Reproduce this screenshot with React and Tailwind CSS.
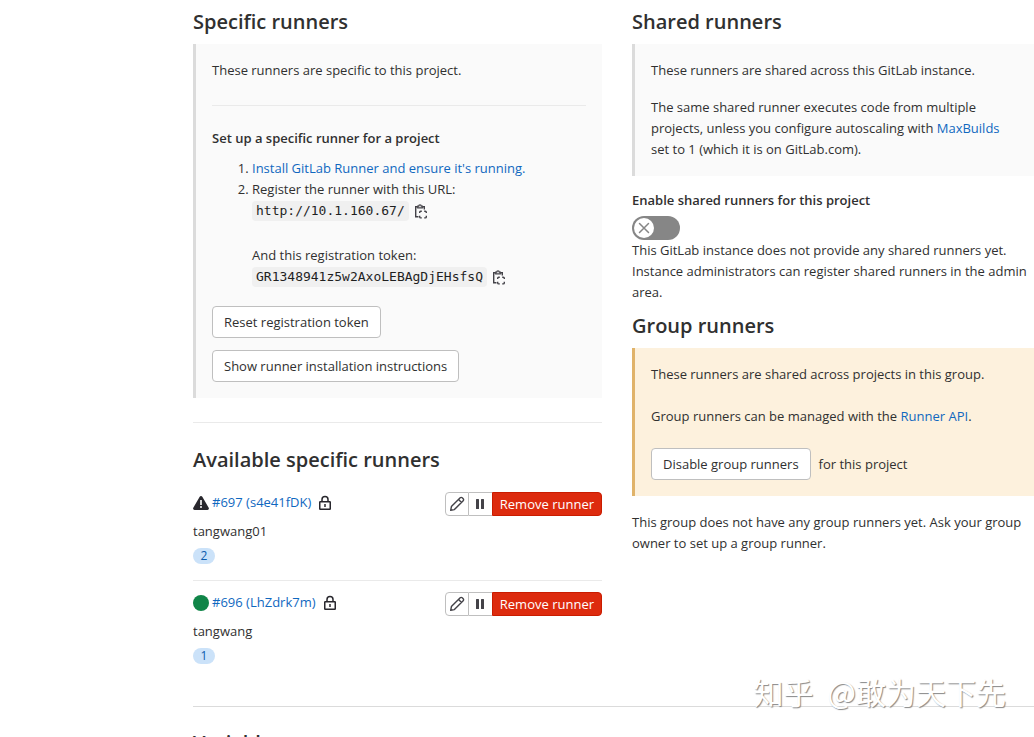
import React from 'react';

const runners = [
    { id: 697, token: 's4e41fDK', name: 'tangwang01', tag: '2', online: false },
    { id: 696, token: 'LhZdrk7m', name: 'tangwang', tag: '1', online: true },
];

const CopyIcon = () => (
    <svg width="16" height="16" viewBox="0 0 16 16" fill="none" stroke="#434248" strokeWidth="1.4">
        <path d="M5.5 12.8H2.7V2.7H4.5M9.5 2.7h1.8V5.5" />
        <path d="M4.7 3.8V2.2h1a1.3 1.3 0 0 1 2.6 0h1v1.6z" strokeWidth="1.2" />
        <path d="M6.7 9V8.2a1 1 0 0 1 1-1h1.1M11.2 7.2h1.1a1 1 0 0 1 1 1V9M13.3 11.8v1.1a1 1 0 0 1-1 1h-1.1M8.8 13.9H7.7a1 1 0 0 1-1-1v-1.1" />
    </svg>
);

const LockIcon = () => (
    <svg width="16" height="16" viewBox="0 0 16 16" fill="none" stroke="#28272d" strokeWidth="1.5">
        <rect x="2.75" y="6.75" width="10.5" height="7.5" rx="0.5" />
        <path d="M5 6.5v-2a3 3 0 0 1 6 0v2" />
        <path d="M8 9v3" />
    </svg>
);

const WarningIcon = () => (
    <svg width="16" height="16" viewBox="0 0 16 16">
        <path
            fill="#28272d"
            fillRule="evenodd"
            d="M9.3 1.7a1.5 1.5 0 0 0-2.6 0L.3 12.8A1.5 1.5 0 0 0 1.6 15h12.8a1.5 1.5 0 0 0 1.3-2.2L9.3 1.7zM7.2 5h1.6v5H7.2V5zM8 13a1 1 0 1 0 0-2 1 1 0 0 0 0 2z"
        />
    </svg>
);

const OnlineIcon = () => (
    <svg width="16" height="16" viewBox="0 0 16 16">
        <circle cx="8" cy="8" r="8" fill="#108548" />
    </svg>
);

const PencilIcon = () => (
    <svg width="16" height="16" viewBox="0 0 16 16" fill="none" stroke="#434248" strokeWidth="1.4" strokeLinejoin="round">
        <path d="M1.7 14.3l.7-3.7 8.8-8.8a1.4 1.4 0 0 1 2 0l1 1a1.4 1.4 0 0 1 0 2l-8.8 8.8zM9.6 3.6l2.9 2.9" />
    </svg>
);

const PauseIcon = () => (
    <svg width="16" height="16" viewBox="0 0 16 16" fill="#434248">
        <rect x="4" y="3" width="3" height="10" rx="0.5" />
        <rect x="9" y="3" width="3" height="10" rx="0.5" />
    </svg>
);

const Heading = ({ children }) => (
    <h4 className="text-xl leading-6 font-semibold text-[#303030]">{children}</h4>
);

const Link = ({ children }) => (
    <a href="#" className="text-[#1068bf] hover:underline">{children}</a>
);

const Button = ({ children }) => (
    <button type="button" className="h-8 rounded border border-[#bfbfbf] bg-white px-[11px] text-[#303030]">
        {children}
    </button>
);

const CopyField = ({ value }) => (
    <div className="flex h-6 items-center gap-1">
        <code className="mb-0.5 rounded bg-[#f0f0f0] px-1 font-['DejaVu_Sans_Mono',monospace] text-[13px] leading-5 text-[#1f1f1f]">{value}</code>
        <button type="button" aria-label="Copy">
            <CopyIcon />
        </button>
    </div>
);

const RunnerRow = ({ runner }) => (
    <li className="flex justify-between border-[#eaeaea] pt-[11px] pb-4 not-last:border-b">
        <div>
            <div className="flex items-center">
                {runner.online ? <OnlineIcon /> : <WarningIcon />}
                <span className="mr-1.5 ml-[3px]">
                    <Link>#{runner.id} ({runner.token})</Link>
                </span>
                <LockIcon />
            </div>
            <p className="mt-2">{runner.name}</p>
            <span className="mt-1.5 flex h-4 w-[22px] items-center justify-center rounded-full bg-[#cbe2f9] text-xs text-[#0b5cad]">
                {runner.tag}
            </span>
        </div>
        <div className="flex h-6">
            <button type="button" aria-label="Edit" className="flex w-6 items-center justify-center rounded-l border border-[#bfbfbf] bg-white">
                <PencilIcon />
            </button>
            <button type="button" aria-label="Pause" className="flex w-[23px] items-center justify-center border-y border-[#bfbfbf] bg-white">
                <PauseIcon />
            </button>
            <button type="button" className="rounded-r border border-[#c91c00] bg-[#dd2b0e] px-[7px] text-white">
                Remove runner
            </button>
        </div>
    </li>
);

const SpecificRunners = () => (
    <section>
        <Heading>Specific runners</Heading>
        <div className="mt-2.5 border-l-3 border-[#dbdbdb] bg-[#fafafa] p-4">
            <p>These runners are specific to this project.</p>
            <hr className="my-6 border-[#eaeaea]" />
            <h5 className="-mt-0.5 font-semibold">Set up a specific runner for a project</h5>
            <ol className="mt-[9px] list-decimal pl-10">
                <li><Link>Install GitLab Runner and ensure it's running.</Link></li>
                <li>
                    Register the runner with this URL:
                    <CopyField value="http://10.1.160.67/" />
                    <p className="mt-[21px]">And this registration token:</p>
                    <CopyField value="GR1348941z5w2AxoLEBAgDjEHsfsQ" />
                </li>
            </ol>
            <div className="mt-4 flex flex-col items-start gap-3">
                <Button>Reset registration token</Button>
                <Button>Show runner installation instructions</Button>
            </div>
        </div>
        <hr className="mt-6 mb-[25px] border-[#eaeaea]" />
        <Heading>Available specific runners</Heading>
        <ul className="mt-[9px]">
            {runners.map((runner) => (
                <RunnerRow key={runner.id} runner={runner} />
            ))}
        </ul>
    </section>
);

const SharedRunners = () => (
    <section>
        <Heading>Shared runners</Heading>
        <div className="mt-2.5 border-l-3 border-[#dbdbdb] bg-[#fafafa] p-4">
            <p>These runners are shared across this GitLab instance.</p>
            <p className="mt-4">
                The same shared runner executes code from multiple projects, unless you configure autoscaling
                with <Link>MaxBuilds</Link> set to 1 (which it is on GitLab.com).
            </p>
        </div>
        <label htmlFor="shared-runners" className="mt-3.5 block font-semibold">
            Enable shared runners for this project
        </label>
        <div className="relative mt-[5px] h-6 w-12">
            <input id="shared-runners" type="checkbox" role="switch" className="block h-6 w-12 appearance-none rounded-full bg-[#868686]" />
            <span className="pointer-events-none absolute top-0.5 left-0.5 size-5 rounded-full bg-white">
                <svg width="20" height="20" viewBox="0 0 20 20" stroke="#868686" strokeWidth="1.5" strokeLinecap="round">
                    <path d="M5.5 5.5l9 9M14.5 5.5l-9 9" />
                </svg>
            </span>
        </div>
        <p>
            This GitLab instance does not provide any shared runners yet. Instance administrators can register
            shared runners in the admin area.
        </p>
    </section>
);

const GroupRunners = () => (
    <section className="mt-[11px]">
        <Heading>Group runners</Heading>
        <div className="mt-2.5 border-l-3 border-[#e0b36a] bg-[#fdf1dd] p-4">
            <p>These runners are shared across projects in this group.</p>
            <p className="mt-[21px]">
                Group runners can be managed with the <Link>Runner API</Link>.
            </p>
            <div className="mt-[21px] flex items-center gap-2">
                <Button>Disable group runners</Button>
                <span>for this project</span>
            </div>
        </div>
        <p className="mt-4">
            This group does not have any group runners yet. Ask your group owner to set up a group runner.
        </p>
    </section>
);

export default function App() {
    return (
        <div className="relative h-screen overflow-hidden bg-white pt-2.5 pl-[193px] font-['Open_Sans','Noto_Sans_CJK_SC',sans-serif] text-[13px] leading-[21px] text-[#303030]">
            <main>
                <div className="grid grid-cols-[409fr_402fr] gap-[30px]">
                    <SpecificRunners />
                    <div>
                        <SharedRunners />
                        <GroupRunners />
                    </div>
                </div>
                <hr className="mt-[26px] mb-6 border-[#dbdbdb]" />
                <Heading>Variables</Heading>
            </main>
            <div className="absolute right-7 bottom-[26px] flex gap-3.5 font-['Noto_Sans_CJK_SC',sans-serif] text-[30px] leading-10 text-white [text-shadow:1px_1px_1px_#888]">
                <span>知乎</span>
                <span>@敢为天下先</span>
            </div>
        </div>
    );
}
